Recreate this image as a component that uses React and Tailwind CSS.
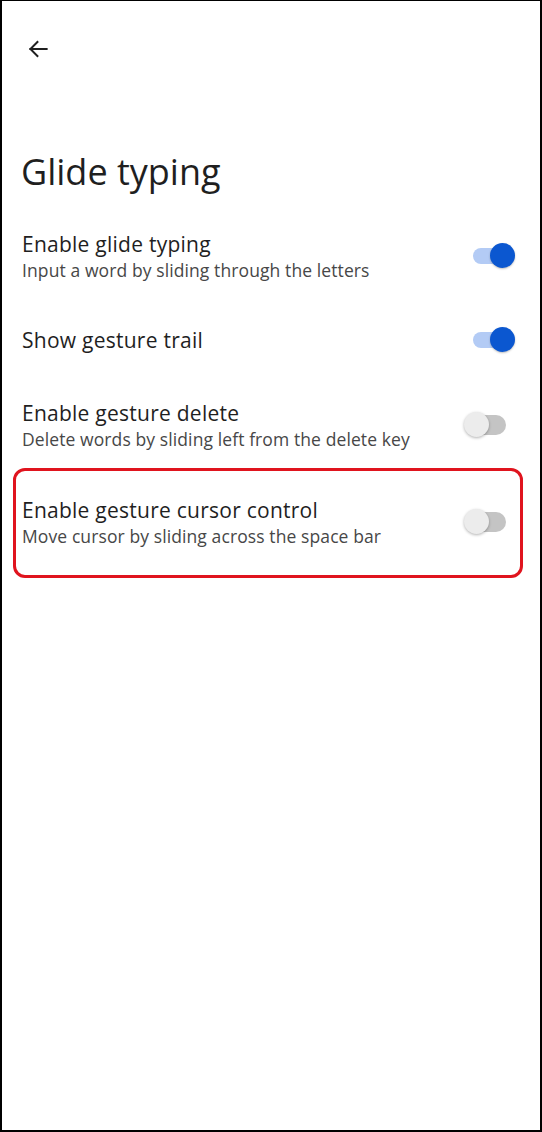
import React from 'react';

const rows = [
  { title: 'Enable glide typing', subtitle: 'Input a word by sliding through the letters', on: true },
  { title: 'Show gesture trail', on: true },
  { title: 'Enable gesture delete', subtitle: 'Delete words by sliding left from the delete key', on: false },
  { title: 'Enable gesture cursor control', subtitle: 'Move cursor by sliding across the space bar', on: false, marked: true },
];

function Toggle({ on }) {
  return (
    <div className="relative w-[52px] h-[26px] shrink-0">
      {on ? (
        <>
          <div className="absolute left-[9px] top-[5px] w-[37px] h-[16px] rounded-full bg-[#b3cbf5]" />
          <div className="absolute left-[26px] top-0 w-[25px] h-[25px] rounded-full bg-[#0b57d0] shadow-[0_1px_2px_rgba(0,0,0,0.25)]" />
        </>
      ) : (
        <>
          <div className="absolute left-[6px] top-[3px] w-[36px] h-[20px] rounded-full bg-[#c4c4c4]" />
          <div className="absolute left-0 top-0 w-[25px] h-[25px] rounded-full bg-[#ececec] shadow-[0_1px_3px_rgba(0,0,0,0.3)]" />
        </>
      )}
    </div>
  );
}

function Row({ title, subtitle, on, marked }) {
  return (
    <div className={`relative flex items-center justify-between pl-[20px] pr-[24px] ${subtitle ? 'h-[97px]' : 'h-[72px]'}`}>
      {marked && (
        <div className="absolute left-[11px] right-[17px] top-[-5px] bottom-[-8px] border-[3px] border-[#e0141e] rounded-[12px] pointer-events-none" />
      )}
      <div className="flex flex-col">
        <div className="text-[21px] leading-[28px] tracking-[0.25px] text-[#1f1f1f]">{title}</div>
        {subtitle && <div className="text-[17.5px] leading-[24px] tracking-[0.1px] text-[#474747]">{subtitle}</div>}
      </div>
      <Toggle on={on} />
    </div>
  );
}

export default function App() {
  return (
    <div
      className="w-[542px] h-[1132px] bg-white border-l-2 border-r-2 border-b-2 border-t border-black flex flex-col"
      style={{ fontFamily: '"Open Sans", Roboto, sans-serif' }}
    >
      <div className="pl-[23px] pt-[35px] h-[149px]">
        <svg width="26" height="26" viewBox="0 0 24 24" fill="none" stroke="#1f1f1f" strokeWidth="1.8" strokeLinecap="square">
          <path d="M20 12H5" />
          <path d="M11.5 5.5 5 12l6.5 6.5" />
        </svg>
      </div>
      <h1 className="pl-[19px] text-[36px] leading-[44px] text-[#1f1f1f] h-[58px]">Glide typing</h1>
      <div className="flex flex-col -mt-[1px]">
        {rows.map((r) => (
          <Row key={r.title} {...r} />
        ))}
      </div>
    </div>
  );
}
